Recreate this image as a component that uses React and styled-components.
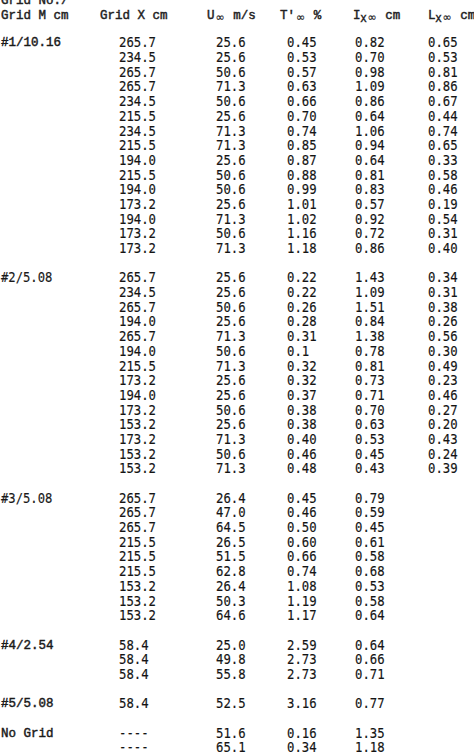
import React from "react";
import styled, { createGlobalStyle } from "styled-components";

const Global = createGlobalStyle`
  html, body { margin: 0; padding: 0; background: #ffffff; }
  body { overflow: hidden; }
`;

const Page = styled.div`
  width: 474px;
  height: 754px;
  overflow: hidden;
  background: #fff;
  color: #161616;
`;

const Sheet = styled.div`
  margin-top: -6px;
  padding-left: 1px;
`;

const Line = styled.div`
  display: grid;
  grid-template-columns: 118px 97px 71px 68px 73px 1fr;
  height: 14.7px;
  line-height: 14.7px;
  white-space: nowrap;
`;

const Head = styled.span`
  font-family: "Liberation Mono", "Courier New", monospace;
  font-size: 12.5px;
  font-weight: 400;
  -webkit-text-stroke: 0.45px #222;
  color: #222;
  margin-left: ${(p) => p.$shift || 0}px;
`;

const Inf = styled.span`
  font-family: "DejaVu Sans", sans-serif;
  font-size: 11px;
  position: relative;
  top: 2px;
  margin: 0 1px;
  -webkit-text-stroke: 0.2px #222;
`;

const Sub = styled.span`
  font-size: 10px;
  position: relative;
  top: 3px;
`;

const Label = styled.span`
  font-family: ${(p) =>
    p.$serif
      ? `"Liberation Mono", "Courier New", monospace`
      : `"DejaVu Sans Mono", monospace`};
  font-size: ${(p) => (p.$serif ? "12.5px" : "12.2px")};
  -webkit-text-stroke: ${(p) => (p.$serif ? "0.45px #1a1a1a" : "0.15px #1a1a1a")};
  color: #1a1a1a;
  display: inline-block;
  transform: ${(p) => (p.$serif ? "none" : "scaleY(1.1)")};
`;

const Cell = styled.span`
  font-family: "DejaVu Sans Mono", monospace;
  font-size: 12.3px;
  color: #141414;
  -webkit-text-stroke: 0.15px #141414;
  display: inline-block;
  transform: scaleY(1.1);
  transform-origin: center;
`;

const Group = styled.div`
  margin-top: ${(p) => p.$gap}px;
`;

const groups = [
  {
    label: "#1/10.16",
    serif: true,
    rows: [
      ["265.7", "25.6", "0.45", "0.82", "0.65"],
      ["234.5", "25.6", "0.53", "0.70", "0.53"],
      ["265.7", "50.6", "0.57", "0.98", "0.81"],
      ["265.7", "71.3", "0.63", "1.09", "0.86"],
      ["234.5", "50.6", "0.66", "0.86", "0.67"],
      ["215.5", "25.6", "0.70", "0.64", "0.44"],
      ["234.5", "71.3", "0.74", "1.06", "0.74"],
      ["215.5", "71.3", "0.85", "0.94", "0.65"],
      ["194.0", "25.6", "0.87", "0.64", "0.33"],
      ["215.5", "50.6", "0.88", "0.81", "0.58"],
      ["194.0", "50.6", "0.99", "0.83", "0.46"],
      ["173.2", "25.6", "1.01", "0.57", "0.19"],
      ["194.0", "71.3", "1.02", "0.92", "0.54"],
      ["173.2", "50.6", "1.16", "0.72", "0.31"],
      ["173.2", "71.3", "1.18", "0.86", "0.40"],
    ],
  },
  {
    label: "#2/5.08",
    rows: [
      ["265.7", "25.6", "0.22", "1.43", "0.34"],
      ["234.5", "25.6", "0.22", "1.09", "0.31"],
      ["265.7", "50.6", "0.26", "1.51", "0.38"],
      ["194.0", "25.6", "0.28", "0.84", "0.26"],
      ["265.7", "71.3", "0.31", "1.38", "0.56"],
      ["194.0", "50.6", "0.1", "0.78", "0.30"],
      ["215.5", "71.3", "0.32", "0.81", "0.49"],
      ["173.2", "25.6", "0.32", "0.73", "0.23"],
      ["194.0", "25.6", "0.37", "0.71", "0.46"],
      ["173.2", "50.6", "0.38", "0.70", "0.27"],
      ["153.2", "25.6", "0.38", "0.63", "0.20"],
      ["173.2", "71.3", "0.40", "0.53", "0.43"],
      ["153.2", "50.6", "0.46", "0.45", "0.24"],
      ["153.2", "71.3", "0.48", "0.43", "0.39"],
    ],
  },
  {
    label: "#3/5.08",
    rows: [
      ["265.7", "26.4", "0.45", "0.79"],
      ["265.7", "47.0", "0.46", "0.59"],
      ["265.7", "64.5", "0.50", "0.45"],
      ["215.5", "26.5", "0.60", "0.61"],
      ["215.5", "51.5", "0.66", "0.58"],
      ["215.5", "62.8", "0.74", "0.68"],
      ["153.2", "26.4", "1.08", "0.53"],
      ["153.2", "50.3", "1.19", "0.58"],
      ["153.2", "64.6", "1.17", "0.64"],
    ],
  },
  {
    label: "#4/2.54",
    serif: true,
    rows: [
      ["58.4", "25.0", "2.59", "0.64"],
      ["58.4", "49.8", "2.73", "0.66"],
      ["58.4", "55.8", "2.73", "0.71"],
    ],
  },
  {
    label: "#5/5.08",
    serif: true,
    rows: [["58.4", "52.5", "3.16", "0.77"]],
  },
  {
    label: "No Grid",
    serif: true,
    rows: [
      ["----", "51.6", "0.16", "1.35"],
      ["----", "65.1", "0.34", "1.18"],
    ],
  },
];

export default function App() {
  return (
    <Page>
      <Global />
      <Sheet>
        <Line>
          <Head>Grid No./</Head>
        </Line>
        <Line>
          <Head>Grid M cm</Head>
          <Head $shift={-19}>Grid X cm</Head>
          <Head $shift={-9}>
            U<Inf>∞</Inf> m/s
          </Head>
          <Head $shift={-7}>
            T'<Inf>∞</Inf> %
          </Head>
          <Head $shift={-2}>
            I<Sub>X</Sub>
            <Inf>∞</Inf> cm
          </Head>
          <Head>
            L<Sub>X</Sub>
            <Inf>∞</Inf> cm
          </Head>
        </Line>
        {groups.map((g, gi) => (
          <Group key={g.label} $gap={gi === 0 ? 13 : 14.7}>
            {g.rows.map((r, ri) => (
              <Line key={ri}>
                <Label $serif={g.serif}>{ri === 0 ? g.label : ""}</Label>
                {r.map((v, ci) => (
                  <Cell key={ci}>{v}</Cell>
                ))}
              </Line>
            ))}
          </Group>
        ))}
      </Sheet>
    </Page>
  );
}
